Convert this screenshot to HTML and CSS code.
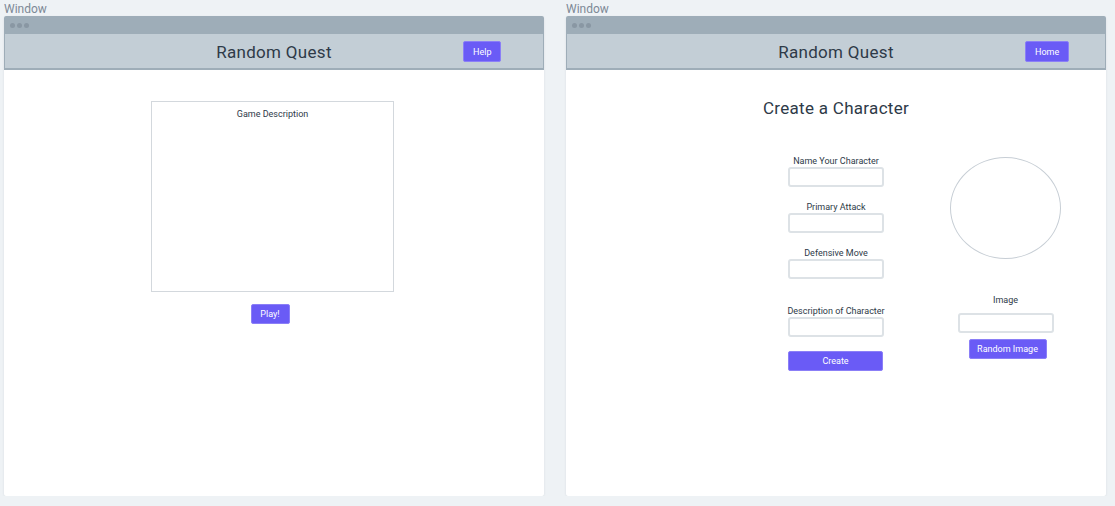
FILE: index.html
```html
<!DOCTYPE html>
<html lang="en">
<head>
    <meta charset="UTF-8">
    <meta name="viewport" content="width=device-width, initial-scale=1.0">
    <title>Random Quest</title>
    <link rel="stylesheet" href="styles.css">
</head>
<body>
    <div class="board">
        <div class="frame">
            <div class="frame-label">Window</div>
            <div class="window">
                <div class="titlebar">
                    <span class="dot"></span><span class="dot"></span><span class="dot"></span>
                </div>
                <div class="header">
                    <h1 class="app-title">Random Quest</h1>
                    <button class="btn header-btn">Help</button>
                </div>
                <div class="content intro">
                    <div class="description-box">Game Description</div>
                    <button class="btn play-btn">Play!</button>
                </div>
            </div>
        </div>

        <div class="frame">
            <div class="frame-label">Window</div>
            <div class="window">
                <div class="titlebar">
                    <span class="dot"></span><span class="dot"></span><span class="dot"></span>
                </div>
                <div class="header">
                    <h1 class="app-title">Random Quest</h1>
                    <button class="btn header-btn">Home</button>
                </div>
                <div class="content creator">
                    <h2 class="page-title">Create a Character</h2>
                    <div class="creator-grid">
                        <div class="form-col">
                            <label class="field">
                                <span class="field-label">Name Your Character</span>
                                <input class="field-input" type="text">
                            </label>
                            <label class="field">
                                <span class="field-label">Primary Attack</span>
                                <input class="field-input" type="text">
                            </label>
                            <label class="field">
                                <span class="field-label">Defensive Move</span>
                                <input class="field-input" type="text">
                            </label>
                            <label class="field field-wide-gap">
                                <span class="field-label">Description of Character</span>
                                <input class="field-input" type="text">
                            </label>
                            <button class="btn create-btn">Create</button>
                        </div>
                        <div class="image-col">
                            <div class="avatar"></div>
                            <span class="field-label image-label">Image</span>
                            <input class="field-input" type="text">
                            <button class="btn random-btn">Random Image</button>
                        </div>
                    </div>
                </div>
            </div>
        </div>
    </div>
</body>
</html>
```

FILE: styles.css
```css
* {
    margin: 0;
    padding: 0;
    box-sizing: border-box;
}

body {
    background: #eef2f5;
    font-family: 'Roboto', 'Liberation Sans', sans-serif;
    color: #2e3a48;
    overflow: hidden;
}

.board {
    display: flex;
    gap: 22px;
    padding: 0 4px;
}

.frame {
    width: 540px;
}

.frame-label {
    height: 16px;
    font-size: 12px;
    line-height: 16px;
    color: #7d8996;
    padding-top: 1px;
}

.window {
    height: 480px;
    background: #ffffff;
    border-radius: 2px;
    box-shadow: 0 1px 2px rgba(80, 100, 120, 0.15);
    overflow: hidden;
}

.titlebar {
    height: 18px;
    background: #9eadb8;
    display: flex;
    align-items: center;
    gap: 2px;
    padding-left: 6px;
}

.dot {
    width: 5px;
    height: 5px;
    border-radius: 50%;
    background: #8997a3;
}

.header {
    position: relative;
    height: 36px;
    padding-top: 2px;
    background: #c3ced6;
    border-bottom: 2px solid #9eadb8;
    border-left: 1px solid #9eadb8;
    border-right: 1px solid #9eadb8;
    display: flex;
    align-items: center;
    justify-content: center;
}

.app-title {
    font-size: 17px;
    font-weight: 400;
    letter-spacing: 0.3px;
    color: #2e3a48;
}

.btn {
    background: #6a5bf6;
    border: 1px solid #8b7ff7;
    border-radius: 2px;
    color: #ffffff;
    font-family: inherit;
    font-size: 9px;
    cursor: pointer;
}

.header-btn {
    position: absolute;
    left: 458px;
    top: 7px;
    height: 21px;
    padding: 0 9px;
    min-width: 37px;
}

.content {
    display: flex;
    flex-direction: column;
    align-items: center;
}

.intro {
    padding-top: 31px;
}

.description-box {
    width: 243px;
    height: 191px;
    border: 1px solid #d3d8dd;
    font-size: 9px;
    text-align: center;
    padding-top: 7px;
    color: #2e3a48;
    margin-left: -3px;
}

.play-btn {
    margin-top: 12px;
    height: 20px;
    width: 39px;
    margin-left: -8px;
}

.creator {
    padding-top: 28px;
}

.page-title {
    font-size: 17px;
    font-weight: 400;
    line-height: 20px;
    letter-spacing: 0.3px;
}

.creator-grid {
    width: 100%;
    display: grid;
    grid-template-columns: 1fr 96px 1fr;
    margin-top: 37px;
}

.form-col {
    grid-column: 2;
    display: flex;
    flex-direction: column;
    gap: 14px;
}

.field {
    display: flex;
    flex-direction: column;
    align-items: center;
}

.field-wide-gap {
    margin-top: 12px;
}

.field-label {
    font-size: 9px;
    line-height: 12px;
    color: #2e3a48;
    white-space: nowrap;
}

.field-input {
    width: 96px;
    height: 20px;
    border: 2px solid #dde2e6;
    border-radius: 3px;
    background: #ffffff;
    outline: none;
}

.create-btn {
    height: 20px;
    width: 95px;
}

.image-col {
    grid-column: 3;
    width: 111px;
    margin-left: 66px;
    display: flex;
    flex-direction: column;
    align-items: center;
    gap: 6px;
}

.avatar {
    width: 111px;
    height: 102px;
    border: 1px solid #c7ced5;
    border-radius: 50%;
    margin-top: 2px;
}

.image-label {
    margin-top: 29px;
    margin-bottom: 1px;
}

.random-btn {
    height: 20px;
    width: 78px;
    margin-left: 4px;
}
```
